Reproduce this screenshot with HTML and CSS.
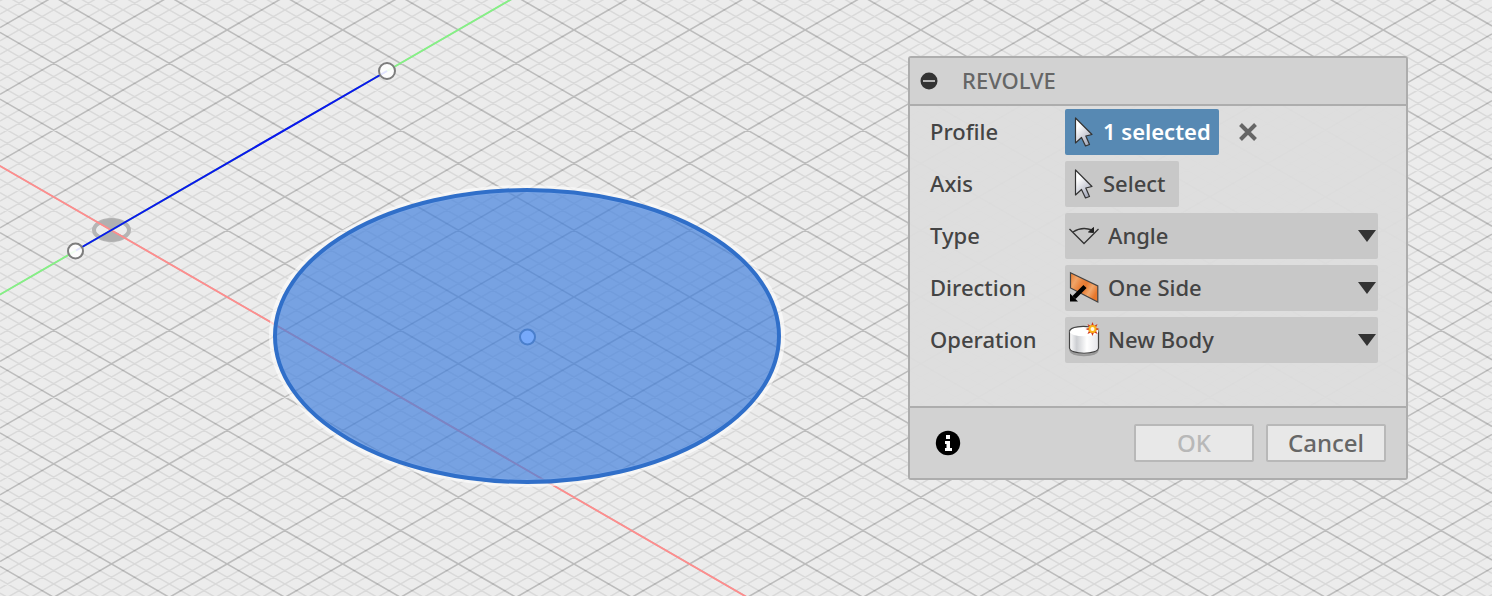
FILE: index.html
```html
<!DOCTYPE html>
<html lang="en">

<head>
    <meta charset="utf-8" />
    <meta name="viewport" content="width=device-width" />
    <title>Revolve</title>
    <link rel="stylesheet" href="styles.css">
</head>
<body>
    <!-- Canvas start -->
    <svg class="canvas" role="img" aria-label="Sketch canvas">
        <path id="grid-minor" class="grid-minor" />
        <path id="grid-major" class="grid-major" />
        <g class="origin">
            <ellipse class="origin-ring" cx="111.5" cy="230" rx="17.5" ry="10" />
            <path class="origin-fill" d="M111.5 230 L98 223 Q111.5 214 125 223 Z M111.5 230 L98 237 Q111.5 246 125 237 Z" />
        </g>
        <path class="axis-x" d="M-100 108.2 L800 627.8" />
        <path class="axis-y" d="M-100 352.2 L600 -52" />
        <path class="sketch-line" d="M76 250.5 L387 71" />
        <ellipse class="profile-halo" cx="527" cy="336" rx="254" ry="147" />
        <ellipse class="profile" cx="527" cy="336" rx="252" ry="146" />
        <circle class="center-point" cx="527.5" cy="337" r="7.5" />
        <circle class="end-point" cx="75.5" cy="251" r="7.5" />
        <circle class="end-point" cx="387" cy="71" r="8" />
    </svg>
    <!-- Canvas end -->

    <!-- Dialog start -->
    <form class="dialog" aria-labelledby="dialog-title">
        <header class="dialog-header">
            <button type="button" class="icon-button" aria-label="Collapse">
                <svg width="18" height="18" viewBox="0 0 18 18">
                    <circle cx="9" cy="9" r="8.5" fill="#333" />
                    <path d="M3 9h12" stroke="#b5b5b5" stroke-width="2" />
                </svg>
            </button>
            <h1 id="dialog-title" class="dialog-title">REVOLVE</h1>
        </header>

        <div class="dialog-body">
            <div class="row">
                <label class="row-label" for="profile">Profile</label>
                <button type="button" id="profile" class="pick pick-active">
                    <svg class="cursor" width="20" height="32" viewBox="0 0 20 32">
                        <use href="#cursor-shape" />
                    </svg>
                    <span class="pick-text">1 selected</span>
                </button>
                <button type="button" class="icon-button clear" aria-label="Clear profile">
                    <svg width="20" height="20" viewBox="0 0 20 20">
                        <path d="M2.500 2.500 L17.500 17.500 M17.500 2.500 L2.500 17.500" stroke="#666" stroke-width="4" />
                    </svg>
                </button>
            </div>
            <div class="row">
                <label class="row-label" for="axis">Axis</label>
                <button type="button" id="axis" class="pick">
                    <svg class="cursor" width="20" height="32" viewBox="0 0 20 32">
                        <use href="#cursor-shape" />
                    </svg>
                    <span class="pick-text">Select</span>
                </button>
            </div>
            <div class="row">
                <label class="row-label" for="type">Type</label>
                <div class="select">
                    <svg class="select-icon" width="32" height="32" viewBox="0 0 32 32">
                        <path d="M1.500 9 L16 23.500 L30.500 9" fill="none" stroke="#333" stroke-width="1.300" />
                        <path d="M5 12 Q14 6 24 10" fill="none" stroke="#333" stroke-width="1.500" />
                        <path d="M25.500 7.500 L25.500 12.500 L20.500 12 Z" fill="#222" stroke="#222" />
                    </svg>
                    <select id="type">
                        <option>Angle</option>
                        <option>To</option>
                        <option>Full</option>
                    </select>
                    <svg class="select-arrow" width="18" height="12" viewBox="0 0 18 12"><path d="M0 0h18l-9 12z" /></svg>
                </div>
            </div>
            <div class="row">
                <label class="row-label" for="direction">Direction</label>
                <div class="select">
                    <svg class="select-icon" width="32" height="32" viewBox="0 0 32 32">
                        <defs>
                            <linearGradient id="plane" x1="0" y1="0" x2="1" y2="0.600">
                                <stop offset="0" stop-color="#e8792c" />
                                <stop offset="0.250" stop-color="#f0a468" />
                                <stop offset="0.450" stop-color="#e9823c" />
                                <stop offset="0.600" stop-color="#e87a30" />
                                <stop offset="0.800" stop-color="#f0a76c" />
                                <stop offset="1" stop-color="#e8772b" />
                            </linearGradient>
                        </defs>
                        <path d="M2.500 0.800 L29.800 14 V30 L2.500 16 Z" fill="url(#plane)" stroke="#444" stroke-width="1.200" />
                        <path d="M17 14.500 L6 25.500" stroke="#000" stroke-width="4.500" />
                        <path d="M2 29.500 V21.500 L10 29.500 Z" />
                    </svg>
                    <select id="direction">
                        <option>One Side</option>
                        <option>Two Sides</option>
                        <option>Symmetric</option>
                    </select>
                    <svg class="select-arrow" width="18" height="12" viewBox="0 0 18 12"><path d="M0 0h18l-9 12z" /></svg>
                </div>
            </div>
            <div class="row">
                <label class="row-label" for="operation">Operation</label>
                <div class="select">
                    <svg class="select-icon" width="32" height="32" viewBox="0 0 32 32">
                        <defs>
                            <linearGradient id="body-side">
                                <stop offset="0" stop-color="#fff" />
                                <stop offset="0.250" stop-color="#ccced2" />
                                <stop offset="0.600" stop-color="#fff" />
                                <stop offset="1" stop-color="#e4e4e8" />
                            </linearGradient>
                        </defs>
                        <path d="M2 26 C4 33 28 33 30 26" fill="none" stroke="#999" stroke-width="2" />
                        <path d="M1.500 7 V24 C2 31 30 31 30.500 24 V7 Z" fill="url(#body-side)" stroke="#444" stroke-width="1.200" />
                        <ellipse cx="16" cy="7.500" rx="14.300" ry="4.800" fill="#fff" />
                        <path d="M1.500 7.500 C2 2 16 2 22 3" fill="none" stroke="#444" stroke-width="1.200" />
                        <path d="M24.500 -2 L26 2 L29.500 0 L27.900 3.800 L31.500 5 L27.900 6.500 L29.500 10 L26 8.500 L24.500 12 L23 8.500 L19.500 10 L21.100 6.500 L17.500 5 L21.100 3.800 L19.500 0 L23 2 Z" fill="#d0381a" />
                        <circle cx="24.500" cy="5" r="4" fill="#fbb318" />
                        <circle cx="24.500" cy="5" r="2" fill="#fffbe8" />
                    </svg>
                    <select id="operation">
                        <option>New Body</option>
                        <option>Join</option>
                        <option>Cut</option>
                    </select>
                    <svg class="select-arrow" width="18" height="12" viewBox="0 0 18 12"><path d="M0 0h18l-9 12z" /></svg>
                </div>
            </div>
        </div>

        <footer class="dialog-footer">
            <button type="button" class="icon-button" aria-label="Info">
                <svg width="26" height="26" viewBox="0 0 26 26">
                    <circle cx="13" cy="13" r="12.200" fill="#000" />
                    <path d="M11 5h4v4h-4z M10 11h5v7h2v3h-7v-3h1.500v-4h-1.500z" fill="#fff" />
                </svg>
            </button>
            <button type="submit" class="button button-ok" disabled>OK</button>
            <button type="button" class="button">Cancel</button>
        </footer>
    </form>
    <!-- Dialog end -->

    <svg class="symbols" width="0" height="0" aria-hidden="true">
        <defs>
            <linearGradient id="cursor-fill" x1="0" y1="0" x2="0.600" y2="1">
                <stop offset="0.300" stop-color="#fff" />
                <stop offset="1" stop-color="#a9adbd" />
            </linearGradient>
            <path id="cursor-shape" d="M2.500 2 V27 L8.500 21.500 L12.500 30 L16.500 28.500 L12.800 20 L19 18.500 Z" fill="url(#cursor-fill)" stroke="#333" stroke-width="1.200" stroke-linejoin="round" />
        </defs>
    </svg>
    <script src="grid.js"></script>
</body>

</html>
```
FILE: styles.css
```css
:root {
    --text-color: #444;
    --border-color: #adadad;
    --control-color: #c8c8c8;
    --bar-color: #d2d2d2;
    --active-color: #5789b3;
    --font-family: "Noto Sans", "Open Sans", sans-serif;
}

* {
    box-sizing: border-box;
    margin: 0;
    padding: 0;
}

body {
    min-height: 100vh;
    background-color: #ececec;
    color: var(--text-color);
    font-family: var(--font-family);
    font-size: 22px;
    font-weight: 500;
    line-height: 32px;
    display: flex;
    justify-content: flex-end;
    align-items: flex-start;
    padding: 56px 84px 0 0;
    overflow: hidden;
}

button,
select {
    font: inherit;
    color: inherit;
    border: none;
    cursor: pointer;
}

svg {
    display: block;
    flex: none;
}

/* Canvas */
.canvas {
    position: absolute;
    top: 0;
    left: 0;
    width: 100%;
    height: 100%;
}

.canvas path {
    fill: none;
}

.canvas .grid-minor {
    stroke: #000;
    stroke-opacity: 0.08;
    stroke-width: 1.5;
}

.canvas .grid-major {
    stroke: #000;
    stroke-opacity: 0.2;
    stroke-width: 1.6;
}

.canvas .axis-x {
    stroke: #ff8c8c;
    stroke-width: 1.8;
}

.canvas .axis-y {
    stroke: #84f284;
    stroke-width: 1.8;
}

.origin-ring {
    fill: none;
    stroke: #b5b5b5;
    stroke-width: 4;
}

.canvas .origin-fill {
    fill: #b0b0b0;
}

.canvas .sketch-line {
    stroke: #0a14f0;
    stroke-width: 2;
}

.profile-halo {
    fill: none;
    stroke: #fff;
    stroke-opacity: 0.6;
    stroke-width: 8;
}

.profile {
    fill: #3f7fdd;
    fill-opacity: 0.68;
    stroke: #306fc9;
    stroke-width: 4;
}

.center-point {
    fill: #76a9fa;
    stroke: #4a7fcc;
    stroke-width: 2;
}

.end-point {
    fill: #fff;
    fill-opacity: 0.88;
    stroke: #7d7d7d;
    stroke-width: 2;
}

/* Dialog */
.dialog {
    position: relative;
    width: 500px;
    border: 2px solid var(--border-color);
    border-radius: 3px;
    background-color: rgba(221, 221, 221, 0.95);
}

.dialog-header {
    display: flex;
    align-items: center;
    gap: 24px;
    height: 48px;
    padding: 0 10px;
    background-color: var(--bar-color);
    border-bottom: 2px solid var(--border-color);
}

.dialog-title {
    padding-bottom: 2px;
    font-size: 22px;
    font-weight: 500;
    color: #666;
}

.icon-button {
    background: none;
}

.dialog-body {
    display: flex;
    flex-direction: column;
    gap: 6px;
    padding: 3px 28px 43px 20px;
}

.row {
    display: flex;
    align-items: center;
    height: 46px;
}

.row-label {
    width: 135px;
    padding-bottom: 2px;
}

.pick {
    display: flex;
    align-items: center;
    gap: 10px;
    height: 46px;
    padding: 0 13px 0 8px;
    background-color: var(--control-color);
    border-radius: 2px;
}

.pick-active {
    padding-right: 8px;
    background-color: var(--active-color);
    color: #fff;
    font-weight: 600;
}

.pick-text {
    padding-bottom: 2px;
}

.clear {
    margin-left: 19px;
}

.select {
    position: relative;
    flex: 1;
    display: flex;
    align-items: center;
}

.select select {
    appearance: none;
    width: 100%;
    height: 46px;
    padding: 0 32px 2px 43px;
    background-color: var(--control-color);
    border-radius: 2px;
}

/* Icon and arrow lie over the select */
.select-icon,
.select-arrow {
    position: absolute;
    pointer-events: none;
}

.select-icon {
    left: 3px;
    overflow: visible;
}

.select-arrow {
    right: 2px;
    fill: #333;
}

.dialog-footer {
    display: flex;
    align-items: center;
    gap: 12px;
    height: 72px;
    padding: 0 20px 0 25px;
    background-color: var(--bar-color);
    border-top: 2px solid var(--border-color);
}

.button {
    width: 120px;
    height: 38px;
    border: 2px solid #b8b8b8;
    border-radius: 2px;
    background-color: #e8e8e8;
    color: #666;
    font-size: 24px;
    line-height: 32px;
}

.button-ok {
    margin-left: auto;
    color: #b8b8b8;
    cursor: default;
}

.symbols {
    position: absolute;
}
```
FILE: grid.js
```js
// Isometric grid, measured from the sketch origin
const originX = 111.5;
const originY = 230.2;
const cell = 66.75;
const divisions = 5;
const slope = Math.tan(Math.PI / 6);

function gridPath(step, skip) {
    const width = window.innerWidth;
    const height = window.innerHeight;
    const reach = Math.ceil((width + height) / step);
    let d = "";
    for (let i = -reach; i <= reach; i++) {
        if (skip && i % skip === 0) continue;
        const y = originY + i * step;
        const left = originX * slope;
        const right = (width - originX) * slope;
        d += `M0 ${y - left}L${width} ${y + right}`;
        d += `M0 ${y + left}L${width} ${y - right}`;
    }
    return d;
}

function drawGrid() {
    document.getElementById("grid-minor").setAttribute("d", gridPath(cell / divisions, divisions));
    document.getElementById("grid-major").setAttribute("d", gridPath(cell, 0));
}

window.addEventListener("resize", drawGrid);
drawGrid();
```
